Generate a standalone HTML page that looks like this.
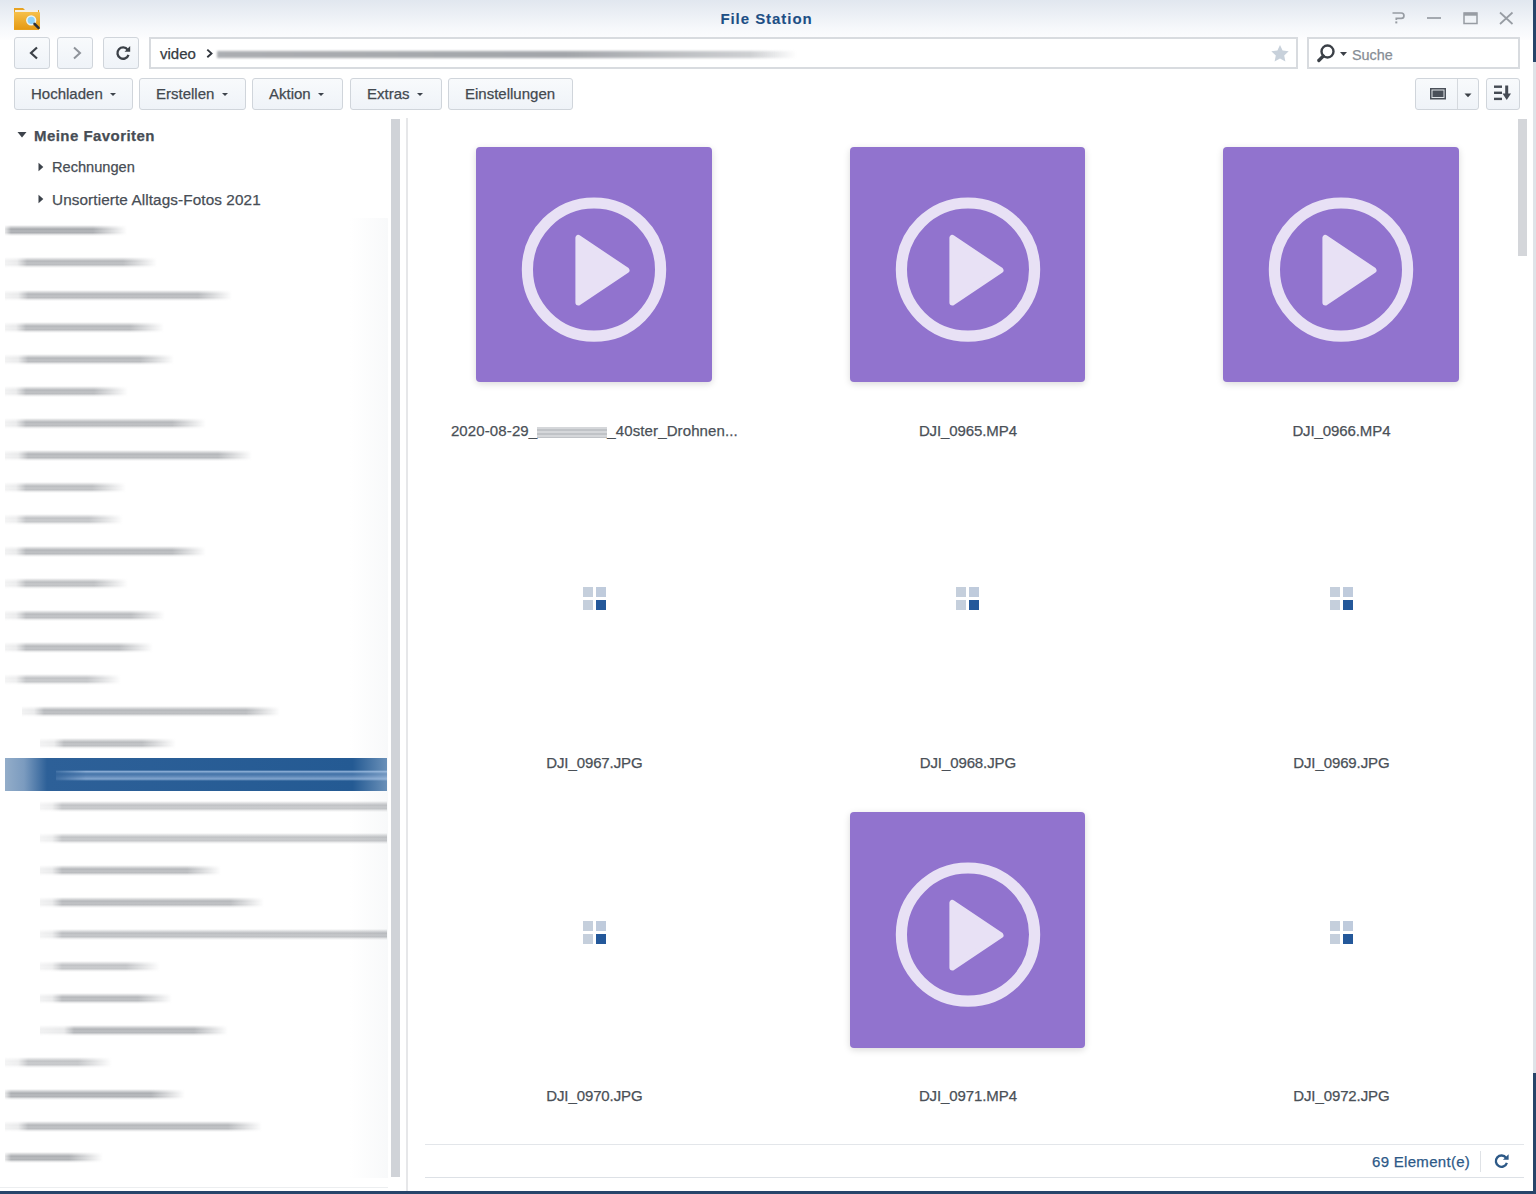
<!DOCTYPE html>
<html><head><meta charset="utf-8">
<style>
*{box-sizing:border-box;margin:0;padding:0}
html,body{width:1536px;height:1194px;overflow:hidden;background:#fff;font-family:"Liberation Sans",sans-serif;color:#404650;-webkit-text-stroke:0.25px currentColor}
.a{position:absolute}
#titlebar{left:0;top:0;width:1536px;height:40px;background:linear-gradient(#e1e7ef,#f6f8fb 70%,#fdfdfe)}
#title{left:0;width:1533px;top:9.8px;text-align:center;font-weight:bold;font-size:15px;letter-spacing:0.95px;color:#1d4f85;-webkit-text-stroke:0.1px #1d4f85}
.btn{border:1.5px solid #d0d5db;border-radius:3px;background:linear-gradient(#f8fafc,#eff3f8)}
.tb{top:78px;height:32px;font-size:15px;color:#434950;line-height:29px;padding-left:16px}
.caret{display:inline-block;width:0;height:0;border-left:3px solid transparent;border-right:3px solid transparent;border-top:3.6px solid #3d434b;vertical-align:middle;margin-left:7.5px;position:relative;top:-1px;-webkit-text-stroke:0}
.inp{border:2px solid #d8dbdf;background:#fff}
.tree{font-size:15px;color:#474d55}
.bl{position:absolute;height:11px;filter:blur(0.7px)}
.tile{position:absolute;width:235.6px;height:235.6px;border-radius:4px;background:#9173ce;box-shadow:0 2px 7px rgba(0,0,0,.15)}
.lbl{position:absolute;width:373px;text-align:center;font-size:15px;letter-spacing:-0.1px;color:#4a5057}
.ld{position:absolute;width:24px;height:24px}
.ld i{position:absolute;width:10px;height:10px;background:#c5cfdc}
</style></head><body>
<div id="titlebar" class="a"></div>
<!-- app icon -->
<svg class="a" style="left:13px;top:6px" width="30" height="26" viewBox="0 0 30 26">
 <defs><linearGradient id="fg" x1="0" y1="0" x2="0" y2="1"><stop offset="0" stop-color="#f6c04a"/><stop offset="1" stop-color="#e59a14"/></linearGradient></defs>
 <path d="M1 2h9l2 2h14v20H1z" fill="#e8a321"/>
 <rect x="2" y="4" width="23" height="3" fill="#f4f0e6"/>
 <rect x="1" y="6" width="26" height="17.2" rx="1" fill="url(#fg)"/>
 <circle cx="18.2" cy="14.3" r="4.4" fill="#8fd3f7" stroke="#e9f4fb" stroke-width="1.5"/>
 <path d="M21.5 17.8l4 4" stroke="#2b3138" stroke-width="2.6" stroke-linecap="round"/>
</svg>
<div id="title" class="a">File Station</div>
<!-- window controls -->
<svg class="a" style="left:1388px;top:8px" width="134" height="20" viewBox="0 0 134 20">
 <g stroke="#979ca3" fill="none" stroke-width="1.7">
  <path d="M4.5 5H13.3A2.65 2.65 0 0 1 13.3 10.3H8.3V12"/>
  <path d="M39 10h14"/>
  <rect x="76" y="5" width="13" height="10.5" stroke-width="1.5"/>
  <path d="M76 6.2h13" stroke-width="3"/>
  <path d="M112 4.5l12.5 11.5M124.5 4.5L112 16"/>
 </g>
 <rect x="7.3" y="13.4" width="2" height="2" fill="#979ca3"/>
</svg>
<div class="a" style="left:1533px;top:0;width:3px;height:1194px;background:#dfe3e8"></div>

<!-- nav row -->
<div class="a btn" style="left:14px;top:37px;width:36px;height:32px"></div>
<svg class="a" style="left:14px;top:37px" width="36" height="32"><path d="M23 10.5l-6 5.5 6 5.5" stroke="#3b4047" stroke-width="2.2" fill="none"/></svg>
<div class="a btn" style="left:57px;top:37px;width:36px;height:32px"></div>
<svg class="a" style="left:57px;top:37px" width="36" height="32"><path d="M17 10.5l6 5.5-6 5.5" stroke="#8e939a" stroke-width="2" fill="none"/></svg>
<div class="a btn" style="left:103px;top:37px;width:36px;height:32px"></div>
<svg class="a" style="left:103px;top:37px" width="36" height="32"><path d="M25.5 17.8A5.65 5.65 0 1 1 24.7 12.8" stroke="#3b4047" stroke-width="2.3" fill="none"/><path d="M27.2 9.1V14.8H21.5z" fill="#3b4047"/></svg>

<div class="a inp" style="left:149px;top:37px;width:1149px;height:32px"></div>
<div class="a" style="left:160px;top:44.7px;font-size:15px;color:#353a41">video</div>
<svg class="a" style="left:203px;top:46px" width="12" height="14"><path d="M4.3 3.6l4.2 3.8-4.2 3.8" stroke="#31363d" stroke-width="1.9" fill="none"/></svg>
<div class="a" style="left:217px;top:50.5px;width:580px;height:7.5px;background:linear-gradient(90deg,#a3a6aa 0%,#999ca1 60%,#c9cbce 92%,rgba(255,255,255,0) 100%);filter:blur(1.1px);opacity:.9"></div>
<svg class="a" style="left:1270px;top:44px" width="20" height="19" viewBox="0 0 20 19"><path d="M10 1l2.6 5.6 6.1.7-4.5 4.2 1.2 6L10 14.5l-5.4 3 1.2-6L1.3 7.3l6.1-.7z" fill="#c8d1db"/></svg>

<div class="a inp" style="left:1307px;top:37px;width:213px;height:32px"></div>
<svg class="a" style="left:1315px;top:42px" width="36" height="22"><circle cx="12.5" cy="9.5" r="6" stroke="#3b4047" stroke-width="2.4" fill="none"/><path d="M8.3 14l-4.5 4.5" stroke="#3b4047" stroke-width="3.2" stroke-linecap="round"/><path d="M25 10h7l-3.5 4z" fill="#3b4047"/></svg>
<div class="a" style="left:1352px;top:46.5px;font-size:14.4px;color:#878d95">Suche</div>

<!-- toolbar -->
<div class="a btn tb" style="left:14px;width:119px">Hochladen<span class="caret"></span></div>
<div class="a btn tb" style="left:139px;width:107px">Erstellen<span class="caret"></span></div>
<div class="a btn tb" style="left:252px;width:91px">Aktion<span class="caret"></span></div>
<div class="a btn tb" style="left:350px;width:92px">Extras<span class="caret"></span></div>
<div class="a btn tb" style="left:448px;width:125px">Einstellungen</div>

<div class="a btn" style="left:1415px;top:78px;width:64px;height:32px"></div>
<div class="a" style="left:1457px;top:79px;width:1px;height:30px;background:#d5d9de"></div>
<svg class="a" style="left:1415px;top:78px" width="64" height="32"><rect x="15.5" y="10.5" width="15" height="10.5" fill="#4a5059" stroke="#4a5059" stroke-width="1"/><rect x="17" y="12" width="12" height="7.5" fill="none" stroke="#dfe3e7" stroke-width="1"/><path d="M49.5 15.5h7l-3.5 3.7z" fill="#3b4047"/></svg>
<div class="a btn" style="left:1486px;top:78px;width:34px;height:32px"></div>
<svg class="a" style="left:1486px;top:78px" width="34" height="32"><g fill="#454b54"><rect x="8" y="7.5" width="8" height="2.4"/><rect x="8" y="13.6" width="8" height="2.4"/><rect x="8" y="19.7" width="8" height="2.4"/><rect x="19.2" y="7.5" width="3" height="9"/><path d="M16.5 15.5h8.5l-4.25 6.5z"/></g></svg>

<!-- left panel -->
<div class="a" style="left:0;top:118px;width:388px;height:1070px;background:#fff"></div>
<div class="a" style="left:350px;top:218px;width:38px;height:960px;background:linear-gradient(90deg,rgba(248,249,250,0),#f8f9fa)"></div>
<div class="a" style="left:391px;top:119px;width:9px;height:1058px;background:#d0d3d8"></div>
<div class="a" style="left:406px;top:118px;width:2px;height:1073px;background:#e6e7e9"></div>
<div class="a" style="left:0;top:1187px;width:388px;height:1px;background:#eceef0"></div>

<svg class="a" style="left:16px;top:130px" width="12" height="10"><path d="M1.5 2h9l-4.5 5.5z" fill="#3d434b"/></svg>
<div class="a tree" style="left:34px;top:127px;font-weight:bold;letter-spacing:0.45px">Meine Favoriten</div>
<svg class="a" style="left:36px;top:161px" width="10" height="12"><path d="M2.5 1.8v8.5l4.8-4.25z" fill="#3d434b"/></svg>
<div class="a tree" style="left:52px;top:159px;font-size:14.6px">Rechnungen</div>
<svg class="a" style="left:36px;top:193px" width="10" height="12"><path d="M2.5 1.8v8.5l4.8-4.25z" fill="#3d434b"/></svg>
<div class="a tree" style="left:52px;top:191px;font-size:15.3px;letter-spacing:0.1px">Unsortierte Alltags-Fotos 2021</div>

<div class="a" style="left:0;top:0;width:387px;height:1188px;overflow:hidden">
<div id="blurs">
<div class="bl" style="left:5px;top:225.0px;width:122px;background:linear-gradient(180deg,rgba(118,122,128,0) 0%,rgba(118,122,128,0.33) 18%,rgba(118,122,128,0.65) 38%,rgba(118,122,128,0.54) 55%,rgba(118,122,128,0.61) 70%,rgba(118,122,128,0.22) 85%,rgba(118,122,128,0) 100%);-webkit-mask-image:linear-gradient(90deg,rgba(0,0,0,.2) 0,rgba(0,0,0,.3) 0px,#000 6px,#000 calc(100% - 34px),rgba(0,0,0,0) 100%)"></div>
<div class="bl" style="left:5px;top:257.2px;width:152px;background:linear-gradient(180deg,rgba(118,122,128,0) 0%,rgba(118,122,128,0.27) 18%,rgba(118,122,128,0.54) 38%,rgba(118,122,128,0.45) 55%,rgba(118,122,128,0.51) 70%,rgba(118,122,128,0.18) 85%,rgba(118,122,128,0) 100%);-webkit-mask-image:linear-gradient(90deg,rgba(0,0,0,.2) 0,rgba(0,0,0,.3) 12px,#000 22px,#000 calc(100% - 34px),rgba(0,0,0,0) 100%)"></div>
<div class="bl" style="left:5px;top:289.5px;width:227px;background:linear-gradient(180deg,rgba(118,122,128,0) 0%,rgba(118,122,128,0.27) 18%,rgba(118,122,128,0.54) 38%,rgba(118,122,128,0.45) 55%,rgba(118,122,128,0.51) 70%,rgba(118,122,128,0.18) 85%,rgba(118,122,128,0) 100%);-webkit-mask-image:linear-gradient(90deg,rgba(0,0,0,.2) 0,rgba(0,0,0,.3) 13px,#000 23px,#000 calc(100% - 34px),rgba(0,0,0,0) 100%)"></div>
<div class="bl" style="left:5px;top:321.5px;width:159px;background:linear-gradient(180deg,rgba(118,122,128,0) 0%,rgba(118,122,128,0.27) 18%,rgba(118,122,128,0.54) 38%,rgba(118,122,128,0.45) 55%,rgba(118,122,128,0.51) 70%,rgba(118,122,128,0.18) 85%,rgba(118,122,128,0) 100%);-webkit-mask-image:linear-gradient(90deg,rgba(0,0,0,.2) 0,rgba(0,0,0,.3) 11px,#000 21px,#000 calc(100% - 34px),rgba(0,0,0,0) 100%)"></div>
<div class="bl" style="left:5px;top:353.5px;width:169px;background:linear-gradient(180deg,rgba(118,122,128,0) 0%,rgba(118,122,128,0.27) 18%,rgba(118,122,128,0.54) 38%,rgba(118,122,128,0.45) 55%,rgba(118,122,128,0.51) 70%,rgba(118,122,128,0.18) 85%,rgba(118,122,128,0) 100%);-webkit-mask-image:linear-gradient(90deg,rgba(0,0,0,.2) 0,rgba(0,0,0,.3) 13px,#000 23px,#000 calc(100% - 34px),rgba(0,0,0,0) 100%)"></div>
<div class="bl" style="left:5px;top:385.5px;width:123px;background:linear-gradient(180deg,rgba(118,122,128,0) 0%,rgba(118,122,128,0.27) 18%,rgba(118,122,128,0.54) 38%,rgba(118,122,128,0.45) 55%,rgba(118,122,128,0.51) 70%,rgba(118,122,128,0.18) 85%,rgba(118,122,128,0) 100%);-webkit-mask-image:linear-gradient(90deg,rgba(0,0,0,.2) 0,rgba(0,0,0,.3) 11px,#000 21px,#000 calc(100% - 34px),rgba(0,0,0,0) 100%)"></div>
<div class="bl" style="left:5px;top:417.5px;width:201px;background:linear-gradient(180deg,rgba(118,122,128,0) 0%,rgba(118,122,128,0.27) 18%,rgba(118,122,128,0.54) 38%,rgba(118,122,128,0.45) 55%,rgba(118,122,128,0.51) 70%,rgba(118,122,128,0.18) 85%,rgba(118,122,128,0) 100%);-webkit-mask-image:linear-gradient(90deg,rgba(0,0,0,.2) 0,rgba(0,0,0,.3) 11px,#000 21px,#000 calc(100% - 34px),rgba(0,0,0,0) 100%)"></div>
<div class="bl" style="left:5px;top:449.5px;width:247px;background:linear-gradient(180deg,rgba(118,122,128,0) 0%,rgba(118,122,128,0.28) 18%,rgba(118,122,128,0.55) 38%,rgba(118,122,128,0.46) 55%,rgba(118,122,128,0.52) 70%,rgba(118,122,128,0.18) 85%,rgba(118,122,128,0) 100%);-webkit-mask-image:linear-gradient(90deg,rgba(0,0,0,.2) 0,rgba(0,0,0,.3) 13px,#000 23px,#000 calc(100% - 34px),rgba(0,0,0,0) 100%)"></div>
<div class="bl" style="left:5px;top:481.5px;width:121px;background:linear-gradient(180deg,rgba(118,122,128,0) 0%,rgba(118,122,128,0.25) 18%,rgba(118,122,128,0.50) 38%,rgba(118,122,128,0.41) 55%,rgba(118,122,128,0.47) 70%,rgba(118,122,128,0.17) 85%,rgba(118,122,128,0) 100%);-webkit-mask-image:linear-gradient(90deg,rgba(0,0,0,.2) 0,rgba(0,0,0,.3) 11px,#000 21px,#000 calc(100% - 34px),rgba(0,0,0,0) 100%)"></div>
<div class="bl" style="left:5px;top:513.5px;width:118px;background:linear-gradient(180deg,rgba(118,122,128,0) 0%,rgba(118,122,128,0.23) 18%,rgba(118,122,128,0.46) 38%,rgba(118,122,128,0.38) 55%,rgba(118,122,128,0.43) 70%,rgba(118,122,128,0.15) 85%,rgba(118,122,128,0) 100%);-webkit-mask-image:linear-gradient(90deg,rgba(0,0,0,.2) 0,rgba(0,0,0,.3) 11px,#000 21px,#000 calc(100% - 34px),rgba(0,0,0,0) 100%)"></div>
<div class="bl" style="left:5px;top:545.5px;width:201px;background:linear-gradient(180deg,rgba(118,122,128,0) 0%,rgba(118,122,128,0.28) 18%,rgba(118,122,128,0.55) 38%,rgba(118,122,128,0.46) 55%,rgba(118,122,128,0.52) 70%,rgba(118,122,128,0.18) 85%,rgba(118,122,128,0) 100%);-webkit-mask-image:linear-gradient(90deg,rgba(0,0,0,.2) 0,rgba(0,0,0,.3) 11px,#000 21px,#000 calc(100% - 34px),rgba(0,0,0,0) 100%)"></div>
<div class="bl" style="left:5px;top:577.5px;width:123px;background:linear-gradient(180deg,rgba(118,122,128,0) 0%,rgba(118,122,128,0.25) 18%,rgba(118,122,128,0.50) 38%,rgba(118,122,128,0.41) 55%,rgba(118,122,128,0.47) 70%,rgba(118,122,128,0.17) 85%,rgba(118,122,128,0) 100%);-webkit-mask-image:linear-gradient(90deg,rgba(0,0,0,.2) 0,rgba(0,0,0,.3) 11px,#000 21px,#000 calc(100% - 34px),rgba(0,0,0,0) 100%)"></div>
<div class="bl" style="left:5px;top:609.5px;width:160px;background:linear-gradient(180deg,rgba(118,122,128,0) 0%,rgba(118,122,128,0.26) 18%,rgba(118,122,128,0.52) 38%,rgba(118,122,128,0.43) 55%,rgba(118,122,128,0.49) 70%,rgba(118,122,128,0.17) 85%,rgba(118,122,128,0) 100%);-webkit-mask-image:linear-gradient(90deg,rgba(0,0,0,.2) 0,rgba(0,0,0,.3) 11px,#000 21px,#000 calc(100% - 34px),rgba(0,0,0,0) 100%)"></div>
<div class="bl" style="left:5px;top:641.5px;width:148px;background:linear-gradient(180deg,rgba(118,122,128,0) 0%,rgba(118,122,128,0.26) 18%,rgba(118,122,128,0.52) 38%,rgba(118,122,128,0.43) 55%,rgba(118,122,128,0.49) 70%,rgba(118,122,128,0.17) 85%,rgba(118,122,128,0) 100%);-webkit-mask-image:linear-gradient(90deg,rgba(0,0,0,.2) 0,rgba(0,0,0,.3) 11px,#000 21px,#000 calc(100% - 34px),rgba(0,0,0,0) 100%)"></div>
<div class="bl" style="left:5px;top:673.5px;width:116px;background:linear-gradient(180deg,rgba(118,122,128,0) 0%,rgba(118,122,128,0.23) 18%,rgba(118,122,128,0.46) 38%,rgba(118,122,128,0.38) 55%,rgba(118,122,128,0.43) 70%,rgba(118,122,128,0.15) 85%,rgba(118,122,128,0) 100%);-webkit-mask-image:linear-gradient(90deg,rgba(0,0,0,.2) 0,rgba(0,0,0,.3) 11px,#000 21px,#000 calc(100% - 34px),rgba(0,0,0,0) 100%)"></div>
<div class="bl" style="left:22px;top:705.5px;width:258px;background:linear-gradient(180deg,rgba(118,122,128,0) 0%,rgba(118,122,128,0.27) 18%,rgba(118,122,128,0.54) 38%,rgba(118,122,128,0.45) 55%,rgba(118,122,128,0.51) 70%,rgba(118,122,128,0.18) 85%,rgba(118,122,128,0) 100%);-webkit-mask-image:linear-gradient(90deg,rgba(0,0,0,.2) 0,rgba(0,0,0,.3) 12px,#000 22px,#000 calc(100% - 34px),rgba(0,0,0,0) 100%)"></div>
<div class="bl" style="left:40px;top:737.5px;width:136px;background:linear-gradient(180deg,rgba(118,122,128,0) 0%,rgba(118,122,128,0.26) 18%,rgba(118,122,128,0.52) 38%,rgba(118,122,128,0.43) 55%,rgba(118,122,128,0.49) 70%,rgba(118,122,128,0.17) 85%,rgba(118,122,128,0) 100%);-webkit-mask-image:linear-gradient(90deg,rgba(0,0,0,.2) 0,rgba(0,0,0,.3) 14px,#000 24px,#000 calc(100% - 34px),rgba(0,0,0,0) 100%)"></div>
<div class="bl" style="left:40px;top:800.5px;width:360px;background:linear-gradient(180deg,rgba(118,122,128,0) 0%,rgba(118,122,128,0.23) 18%,rgba(118,122,128,0.46) 38%,rgba(118,122,128,0.38) 55%,rgba(118,122,128,0.43) 70%,rgba(118,122,128,0.15) 85%,rgba(118,122,128,0) 100%);-webkit-mask-image:linear-gradient(90deg,rgba(0,0,0,.2) 0,rgba(0,0,0,.3) 12px,#000 22px,#000 100%)"></div>
<div class="bl" style="left:40px;top:833.0px;width:360px;background:linear-gradient(180deg,rgba(118,122,128,0) 0%,rgba(118,122,128,0.23) 18%,rgba(118,122,128,0.46) 38%,rgba(118,122,128,0.38) 55%,rgba(118,122,128,0.43) 70%,rgba(118,122,128,0.15) 85%,rgba(118,122,128,0) 100%);-webkit-mask-image:linear-gradient(90deg,rgba(0,0,0,.2) 0,rgba(0,0,0,.3) 12px,#000 22px,#000 100%)"></div>
<div class="bl" style="left:40px;top:864.5px;width:181px;background:linear-gradient(180deg,rgba(118,122,128,0) 0%,rgba(118,122,128,0.27) 18%,rgba(118,122,128,0.54) 38%,rgba(118,122,128,0.45) 55%,rgba(118,122,128,0.51) 70%,rgba(118,122,128,0.18) 85%,rgba(118,122,128,0) 100%);-webkit-mask-image:linear-gradient(90deg,rgba(0,0,0,.2) 0,rgba(0,0,0,.3) 12px,#000 22px,#000 calc(100% - 34px),rgba(0,0,0,0) 100%)"></div>
<div class="bl" style="left:40px;top:896.9px;width:224px;background:linear-gradient(180deg,rgba(118,122,128,0) 0%,rgba(118,122,128,0.27) 18%,rgba(118,122,128,0.54) 38%,rgba(118,122,128,0.45) 55%,rgba(118,122,128,0.51) 70%,rgba(118,122,128,0.18) 85%,rgba(118,122,128,0) 100%);-webkit-mask-image:linear-gradient(90deg,rgba(0,0,0,.2) 0,rgba(0,0,0,.3) 12px,#000 22px,#000 calc(100% - 34px),rgba(0,0,0,0) 100%)"></div>
<div class="bl" style="left:40px;top:929.0px;width:360px;background:linear-gradient(180deg,rgba(118,122,128,0) 0%,rgba(118,122,128,0.25) 18%,rgba(118,122,128,0.50) 38%,rgba(118,122,128,0.41) 55%,rgba(118,122,128,0.47) 70%,rgba(118,122,128,0.17) 85%,rgba(118,122,128,0) 100%);-webkit-mask-image:linear-gradient(90deg,rgba(0,0,0,.2) 0,rgba(0,0,0,.3) 12px,#000 22px,#000 100%)"></div>
<div class="bl" style="left:40px;top:960.5px;width:120px;background:linear-gradient(180deg,rgba(118,122,128,0) 0%,rgba(118,122,128,0.23) 18%,rgba(118,122,128,0.46) 38%,rgba(118,122,128,0.38) 55%,rgba(118,122,128,0.43) 70%,rgba(118,122,128,0.15) 85%,rgba(118,122,128,0) 100%);-webkit-mask-image:linear-gradient(90deg,rgba(0,0,0,.2) 0,rgba(0,0,0,.3) 12px,#000 22px,#000 calc(100% - 34px),rgba(0,0,0,0) 100%)"></div>
<div class="bl" style="left:40px;top:993.0px;width:132px;background:linear-gradient(180deg,rgba(118,122,128,0) 0%,rgba(118,122,128,0.27) 18%,rgba(118,122,128,0.54) 38%,rgba(118,122,128,0.45) 55%,rgba(118,122,128,0.51) 70%,rgba(118,122,128,0.18) 85%,rgba(118,122,128,0) 100%);-webkit-mask-image:linear-gradient(90deg,rgba(0,0,0,.2) 0,rgba(0,0,0,.3) 12px,#000 22px,#000 calc(100% - 34px),rgba(0,0,0,0) 100%)"></div>
<div class="bl" style="left:40px;top:1025.0px;width:188px;background:linear-gradient(180deg,rgba(118,122,128,0) 0%,rgba(118,122,128,0.29) 18%,rgba(118,122,128,0.57) 38%,rgba(118,122,128,0.48) 55%,rgba(118,122,128,0.54) 70%,rgba(118,122,128,0.19) 85%,rgba(118,122,128,0) 100%);-webkit-mask-image:linear-gradient(90deg,rgba(0,0,0,.2) 0,rgba(0,0,0,.3) 24px,#000 34px,#000 calc(100% - 34px),rgba(0,0,0,0) 100%)"></div>
<div class="bl" style="left:5px;top:1057.0px;width:107px;background:linear-gradient(180deg,rgba(118,122,128,0) 0%,rgba(118,122,128,0.23) 18%,rgba(118,122,128,0.46) 38%,rgba(118,122,128,0.38) 55%,rgba(118,122,128,0.43) 70%,rgba(118,122,128,0.15) 85%,rgba(118,122,128,0) 100%);-webkit-mask-image:linear-gradient(90deg,rgba(0,0,0,.2) 0,rgba(0,0,0,.3) 13px,#000 23px,#000 calc(100% - 34px),rgba(0,0,0,0) 100%)"></div>
<div class="bl" style="left:5px;top:1089.0px;width:180px;background:linear-gradient(180deg,rgba(118,122,128,0) 0%,rgba(118,122,128,0.31) 18%,rgba(118,122,128,0.61) 38%,rgba(118,122,128,0.51) 55%,rgba(118,122,128,0.58) 70%,rgba(118,122,128,0.20) 85%,rgba(118,122,128,0) 100%);-webkit-mask-image:linear-gradient(90deg,rgba(0,0,0,.2) 0,rgba(0,0,0,.3) 0px,#000 6px,#000 calc(100% - 34px),rgba(0,0,0,0) 100%)"></div>
<div class="bl" style="left:5px;top:1121.0px;width:257px;background:linear-gradient(180deg,rgba(118,122,128,0) 0%,rgba(118,122,128,0.27) 18%,rgba(118,122,128,0.54) 38%,rgba(118,122,128,0.45) 55%,rgba(118,122,128,0.51) 70%,rgba(118,122,128,0.18) 85%,rgba(118,122,128,0) 100%);-webkit-mask-image:linear-gradient(90deg,rgba(0,0,0,.2) 0,rgba(0,0,0,.3) 13px,#000 23px,#000 calc(100% - 34px),rgba(0,0,0,0) 100%)"></div>
<div class="bl" style="left:5px;top:1151.5px;width:98px;background:linear-gradient(180deg,rgba(118,122,128,0) 0%,rgba(118,122,128,0.31) 18%,rgba(118,122,128,0.61) 38%,rgba(118,122,128,0.51) 55%,rgba(118,122,128,0.58) 70%,rgba(118,122,128,0.20) 85%,rgba(118,122,128,0) 100%);-webkit-mask-image:linear-gradient(90deg,rgba(0,0,0,.2) 0,rgba(0,0,0,.3) 0px,#000 6px,#000 calc(100% - 34px),rgba(0,0,0,0) 100%)"></div>
</div><!-- /blurs -->
<div class="a" style="left:5px;top:758px;width:382px;height:33px;background:linear-gradient(90deg,#93adc9 0%,#7b9bbf 5%,#2d6098 11%,#245a93 91%,#6a90b8 100%)"></div>
<div class="a" style="left:56px;top:769.5px;width:331px;height:11px;background:linear-gradient(180deg,rgba(160,190,228,0) 0%,rgba(170,198,232,.75) 14%,rgba(130,165,210,.3) 35%,rgba(150,180,220,.45) 55%,rgba(170,198,232,.7) 82%,rgba(160,190,228,0) 100%);-webkit-mask-image:linear-gradient(90deg,rgba(0,0,0,.25) 0,#000 30px,#000 100%);filter:blur(0.5px)"></div>
</div>

<!-- main grid -->
<div id="grid">
<div class="tile" style="left:476.4px;top:146.75px"><svg width="236" height="236" viewBox="0 0 236 236" style="position:absolute;left:0;top:0"><circle cx="118" cy="122.6" r="66.6" fill="none" stroke="#e8e1f5" stroke-width="11.2"/><path d="M102.4 91V155.5L150.5 123.3Z" fill="#e8e1f5" stroke="#e8e1f5" stroke-width="6" stroke-linejoin="round"/></svg></div>
<div class="lbl" style="left:407.9px;top:422px"><span style="letter-spacing:0.12px">2020-08-29_<span style="display:inline-block;width:70px;height:11px;vertical-align:-2px;background:repeating-linear-gradient(#d5d7da 0 2px,#c0c3c7 2px 4px);filter:blur(0.5px)"></span>_40ster_Drohnen...</span></div>
<div class="tile" style="left:849.9px;top:146.75px"><svg width="236" height="236" viewBox="0 0 236 236" style="position:absolute;left:0;top:0"><circle cx="118" cy="122.6" r="66.6" fill="none" stroke="#e8e1f5" stroke-width="11.2"/><path d="M102.4 91V155.5L150.5 123.3Z" fill="#e8e1f5" stroke="#e8e1f5" stroke-width="6" stroke-linejoin="round"/></svg></div>
<div class="lbl" style="left:781.4px;top:422px">DJI_0965.MP4</div>
<div class="tile" style="left:1223.4px;top:146.75px"><svg width="236" height="236" viewBox="0 0 236 236" style="position:absolute;left:0;top:0"><circle cx="118" cy="122.6" r="66.6" fill="none" stroke="#e8e1f5" stroke-width="11.2"/><path d="M102.4 91V155.5L150.5 123.3Z" fill="#e8e1f5" stroke="#e8e1f5" stroke-width="6" stroke-linejoin="round"/></svg></div>
<div class="lbl" style="left:1154.9px;top:422px">DJI_0966.MP4</div>
<div class="ld" style="left:582.9px;top:587.4px"><i style="left:0;top:0"></i><i style="left:13px;top:0;background:#bfcbdc"></i><i style="left:0;top:13px"></i><i style="left:13px;top:13px;background:#24589a"></i></div>
<div class="lbl" style="left:407.9px;top:754px">DJI_0967.JPG</div>
<div class="ld" style="left:956.4px;top:587.4px"><i style="left:0;top:0"></i><i style="left:13px;top:0;background:#bfcbdc"></i><i style="left:0;top:13px"></i><i style="left:13px;top:13px;background:#24589a"></i></div>
<div class="lbl" style="left:781.4px;top:754px">DJI_0968.JPG</div>
<div class="ld" style="left:1329.9px;top:587.4px"><i style="left:0;top:0"></i><i style="left:13px;top:0;background:#bfcbdc"></i><i style="left:0;top:13px"></i><i style="left:13px;top:13px;background:#24589a"></i></div>
<div class="lbl" style="left:1154.9px;top:754px">DJI_0969.JPG</div>
<div class="ld" style="left:582.9px;top:920.5px"><i style="left:0;top:0"></i><i style="left:13px;top:0;background:#bfcbdc"></i><i style="left:0;top:13px"></i><i style="left:13px;top:13px;background:#24589a"></i></div>
<div class="lbl" style="left:407.9px;top:1087px">DJI_0970.JPG</div>
<div class="tile" style="left:849.9px;top:812.4px"><svg width="236" height="236" viewBox="0 0 236 236" style="position:absolute;left:0;top:0"><circle cx="118" cy="122.6" r="66.6" fill="none" stroke="#e8e1f5" stroke-width="11.2"/><path d="M102.4 91V155.5L150.5 123.3Z" fill="#e8e1f5" stroke="#e8e1f5" stroke-width="6" stroke-linejoin="round"/></svg></div>
<div class="lbl" style="left:781.4px;top:1087px">DJI_0971.MP4</div>
<div class="ld" style="left:1329.9px;top:920.5px"><i style="left:0;top:0"></i><i style="left:13px;top:0;background:#bfcbdc"></i><i style="left:0;top:13px"></i><i style="left:13px;top:13px;background:#24589a"></i></div>
<div class="lbl" style="left:1154.9px;top:1087px">DJI_0972.JPG</div>
</div>

<!-- status bar -->
<div class="a" style="left:425px;top:1144px;width:1099px;height:1px;background:#e3e6ea"></div>
<div class="a" style="left:425px;top:1177px;width:1099px;height:1px;background:#dde1e6"></div>
<div class="a" style="left:1372px;top:1153px;font-size:15px;letter-spacing:0.3px;color:#2d5987">69 Element(e)</div>
<div class="a" style="left:1480px;top:1151px;width:1px;height:21px;background:#dfe2e6"></div>
<svg class="a" style="left:1492px;top:1151px" width="20" height="20"><path d="M14.9 11.85A5.65 5.65 0 1 1 14.1 6.85" stroke="#2d5987" stroke-width="2.3" fill="none"/><path d="M16.6 3.15V8.85H10.9z" fill="#2d5987"/></svg>

<!-- scrollbar main -->
<div class="a" style="left:1518px;top:119px;width:9px;height:137px;background:#d4d6da"></div>

<!-- window frame bottom/right -->
<div class="a" style="left:1533px;top:0;width:3px;height:62px;background:#27456a"></div>
<div class="a" style="left:0;top:1191px;width:1536px;height:3px;background:#27456a"></div>
<div class="a" style="left:1533px;top:1073px;width:3px;height:121px;background:#27456a"></div>
</body></html>
